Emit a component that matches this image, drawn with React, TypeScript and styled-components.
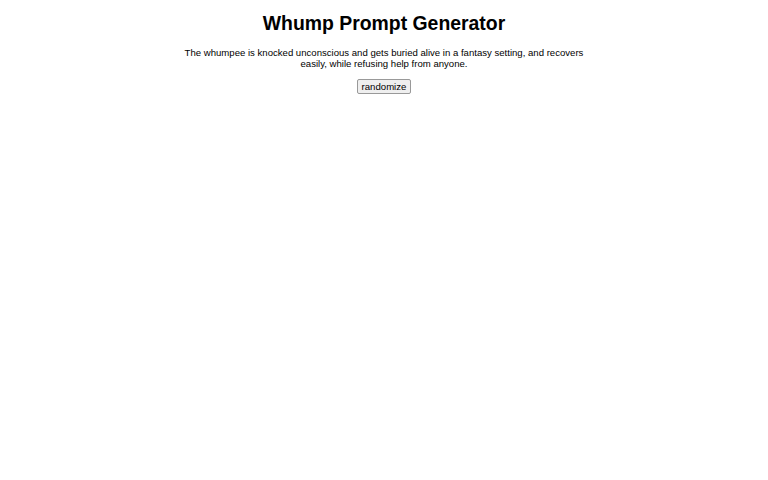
import React, { useState } from 'react';
import styled, { createGlobalStyle } from 'styled-components';

const GlobalStyle = createGlobalStyle`
  body {
    margin: 0;
    background: #fff;
    font-family: "Liberation Sans", Arial, sans-serif;
    color: #000;
  }
`;

const Page = styled.div`
  display: flex;
  flex-direction: column;
  align-items: center;
  padding-top: 12px;
`;

const Title = styled.h1`
  margin: 0;
  font-size: 19.4px;
  font-weight: bold;
  line-height: 23px;
`;

const Prompt = styled.p`
  width: 404px;
  margin: 12px 0 0;
  font-size: 9.58px;
  line-height: 11px;
  text-align: center;
`;

const RandomButton = styled.button`
  margin-top: 10px;
  padding: 1px 4px;
  font-family: "Liberation Sans", Arial, sans-serif;
  font-size: 9.6px;
  line-height: 11px;
  color: #000;
  background: #efefef;
  border: 1px solid #999;
  border-radius: 2px;
  cursor: pointer;
`;

const prompts = [
  'The whumpee is knocked unconscious and gets buried alive in a fantasy setting, and recovers easily, while refusing help from anyone.',
];

export default function App() {
  const [text] = useState(prompts[0]);
  return (
    <>
      <GlobalStyle />
      <Page>
        <Title>Whump Prompt Generator</Title>
        <Prompt>{text}</Prompt>
        <RandomButton>randomize</RandomButton>
      </Page>
    </>
  );
}
